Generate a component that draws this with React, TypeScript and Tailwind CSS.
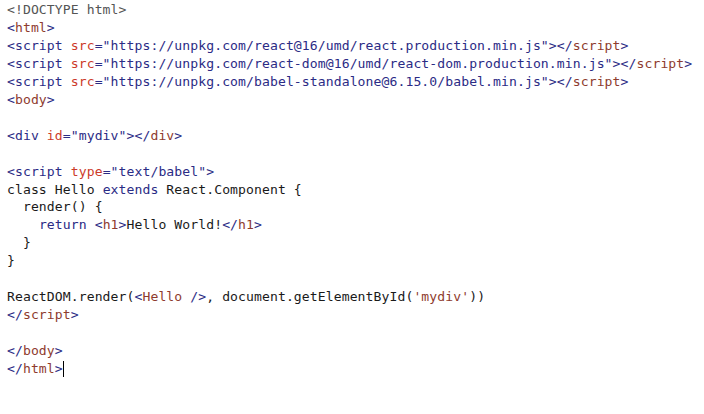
import React from "react";

const N = ({ children }: { children: React.ReactNode }) => (
  <span className="text-[#2b2b85]">{children}</span>
);
const B = ({ children }: { children: React.ReactNode }) => (
  <span className="text-[#8e3b2e]">{children}</span>
);
const A = ({ children }: { children: React.ReactNode }) => (
  <span className="text-[#cc3a2a]">{children}</span>
);

const App = () => {
  return (
    <div className="w-[704px] h-[414px] bg-white overflow-hidden">
      <pre
        className="pl-[7px] pt-[1px] text-[13.1px] tracking-[0.085px] leading-[17.95px] text-[#1a1a1a]"
        style={{ fontFamily: '"DejaVu Sans Mono", "Liberation Mono", monospace' }}
      >
        <div className="text-[#555555]">{"<!DOCTYPE html>"}</div>
        <div>
          <N>{"<"}</N>
          <B>html</B>
          <N>{">"}</N>
        </div>
        <div>
          <N>{"<script "}</N>
          <A>src</A>
          <N>{'="https://unpkg.com/react@16/umd/react.production.min.js"></'}</N>
          <B>script</B>
          <N>{">"}</N>
        </div>
        <div>
          <N>{"<script "}</N>
          <A>src</A>
          <N>{'="https://unpkg.com/react-dom@16/umd/react-dom.production.min.js"></'}</N>
          <B>script</B>
          <N>{">"}</N>
        </div>
        <div>
          <N>{"<script "}</N>
          <A>src</A>
          <N>{'="https://unpkg.com/babel-standalone@6.15.0/babel.min.js"></'}</N>
          <B>script</B>
          <N>{">"}</N>
        </div>
        <div>
          <N>{"<"}</N>
          <B>body</B>
          <N>{">"}</N>
        </div>
        <div>{" "}</div>
        <div>
          <N>{"<div "}</N>
          <A>id</A>
          <N>{'="mydiv"></'}</N>
          <B>div</B>
          <N>{">"}</N>
        </div>
        <div>{" "}</div>
        <div>
          <N>{"<script "}</N>
          <A>type</A>
          <N>{'="text/babel">'}</N>
        </div>
        <div>
          {"class Hello "}
          <N>extends</N>
          {" React.Component {"}
        </div>
        <div>{"  render() {"}</div>
        <div>
          {"    "}
          <N>return</N> <N>{"<"}</N>
          <B>h1</B>
          <N>{">"}</N>
          {"Hello World!"}
          <N>{"</"}</N>
          <B>h1</B>
          <N>{">"}</N>
        </div>
        <div>{"  }"}</div>
        <div>{"}"}</div>
        <div>{" "}</div>
        <div>
          {"ReactDOM.render("}
          <N>{"<"}</N>
          <B>Hello</B>
          <N>{" />"}</N>
          {", document.getElementById("}
          <B>{"'mydiv'"}</B>
          {"))"}
        </div>
        <div>
          <N>{"</"}</N>
          <B>script</B>
          <N>{">"}</N>
        </div>
        <div>{" "}</div>
        <div>
          <N>{"</"}</N>
          <B>body</B>
          <N>{">"}</N>
        </div>
        <div className="flex items-center">
          <N>{"</"}</N>
          <B>html</B>
          <N>{">"}</N>
          <span className="inline-block w-[1px] h-[16px] bg-black" />
        </div>
      </pre>
    </div>
  );
};

export default App;
